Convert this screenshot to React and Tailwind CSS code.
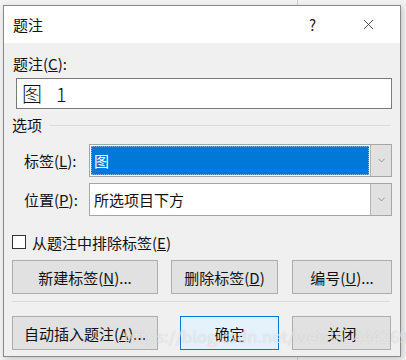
import { ChevronDown, X } from "lucide-react";

const font = { fontFamily: '"Noto Sans CJK SC", "Liberation Sans", sans-serif' };

function Btn({ children, className = "", primary = false }) {
  return (
    <button
      type="button"
      className={
        "flex h-[34px] items-center justify-center text-[15px] leading-none text-[#111] " +
        (primary
          ? "border border-[#0078d7] bg-[#e5f1fb] "
          : "border border-[#adadad] bg-[#e1e1e1] ") +
        className
      }
    >
      {children}
    </button>
  );
}

function Combo({ label, children, selected = false }) {
  return (
    <div className="flex items-center">
      <div className="w-[77px] pl-[12px] text-[15px] leading-none text-[#111]">{label}</div>
      <div className="flex h-[33px] w-[303px] border border-[#a6a6a6] bg-white">
        <div className="flex flex-1 items-stretch p-[1px]">
          {selected ? (
            <div className="flex flex-1 items-center border border-dotted border-[#7fb5e6] bg-[#0078d7] pl-[2px] text-[15px] leading-none text-white">
              {children}
            </div>
          ) : (
            <div className="flex flex-1 items-center pl-[3px] text-[15px] leading-none text-[#111]">
              {children}
            </div>
          )}
        </div>
        <div className="flex w-[21px] items-center justify-center border-l border-[#b5b5b5] bg-[#e1e1e1]">
          <ChevronDown size={11} strokeWidth={1.2} className="text-[#555]" />
        </div>
      </div>
    </div>
  );
}

export default function App() {
  return (
    <div
      className="relative h-[360px] w-[406px] overflow-hidden bg-[#f2f2f2] pl-[3px] pt-[5px]"
      style={font}
    >
      <div className="absolute left-[297px] top-0 h-full w-px bg-[#d0d0d0]" />
      <div className="relative flex h-[352px] w-[398px] flex-col border border-[#8a8a8a] bg-[#f0f0f0] shadow-[2px_2px_6px_rgba(0,0,0,0.18)]">
        {/* title bar */}
        <div className="flex h-[37px] items-center bg-white pl-[9px]">
          <span className="text-[15px] leading-none text-[#111]">题注</span>
          <span className="ml-auto mr-[44px] text-[15px] leading-none text-[#222]">?</span>
          <X size={17} strokeWidth={1.1} className="mr-[23px] text-[#222]" />
        </div>

        <div className="flex flex-col pl-[8px] pr-[6px]">
          <div className="mt-[12px] pl-[1px] text-[15px] leading-[18px] text-[#111]">
            题注(<u>C</u>):
          </div>
          <div className="ml-[4px] mt-[5px] flex h-[31px] w-[376px] items-center border border-[#7a7a7a] bg-white pl-[5px] text-[20px] font-light leading-none text-[#111]">
            <span>图</span>
            <span className="ml-[14px]">1</span>
          </div>

          <div className="mt-[7px] flex items-center">
            <span className="text-[15px] leading-[18px] text-[#111]">选项</span>
            <div className="ml-[7px] h-px flex-1 bg-[#dcdcdc]" />
            <div className="w-[3px]" />
          </div>

          <div className="mt-[10px]">
            <Combo label={<>标签(<u>L</u>):</>} selected>
              图
            </Combo>
          </div>
          <div className="mt-[6px]">
            <Combo label={<>位置(<u>P</u>):</>}>所选项目下方</Combo>
          </div>

          <div className="mt-[17px] flex h-[18px] items-center">
            <div className="h-[14px] w-[14px] border border-[#333] bg-white" />
            <span className="ml-[6px] text-[15px] leading-none text-[#111]">
              从题注中排除标签(<u>E</u>)
            </span>
          </div>

          <div className="mt-[9px] flex">
            <Btn className="w-[146px]">
              新建标签(<u>N</u>)...
            </Btn>
            <Btn className="ml-[13px] w-[107px]">
              删除标签(<u>D</u>)
            </Btn>
            <Btn className="ml-[14px] w-[100px]">
              编号(<u>U</u>)...
            </Btn>
          </div>

          <div className="mt-[7px] h-px w-[378px] bg-[#dcdcdc]" />

          <div className="mt-[14px] flex">
            <Btn className="w-[146px]">
              自动插入题注(<u>A</u>)...
            </Btn>
            <Btn primary className="ml-[22px] w-[99px]">
              确定
            </Btn>
            <Btn className="ml-[13px] w-[99px]">关闭</Btn>
          </div>
        </div>

        <div className="pointer-events-none absolute left-[120px] top-[322px] whitespace-nowrap text-[16px] leading-none tracking-[0.3px] text-white/60 [text-shadow:0_0_1px_rgba(150,150,150,0.5)]">
          https://blog.csdn.net/weixin_44426997
        </div>
      </div>
    </div>
  );
}
